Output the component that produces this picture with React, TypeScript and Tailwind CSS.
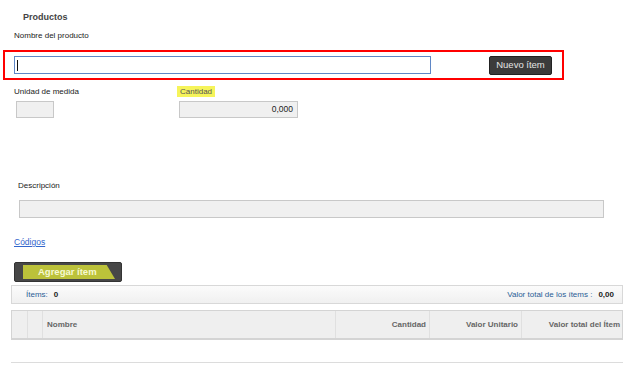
export default function App() {
  return (
    <div className="w-[633px] h-[370px] overflow-hidden bg-white text-[#222] font-['Liberation_Sans',Arial,sans-serif]">
      <div className="pl-[23px] pt-[11px] text-[9px] font-bold text-[#444] leading-[12px]">Productos</div>
      <div className="pl-[14px] mt-[8px] text-[8px] leading-[10px]">Nombre del producto</div>

      <div className="ml-[3px] mt-[9px] w-[561px] h-[30px] border-2 border-[#ff0000] flex items-center">
        <div className="ml-[9px] w-[417px] h-[18px] border border-[#5f87c6] bg-white flex items-center">
          <div className="ml-[2px] w-px h-[11px] bg-[#111]" />
        </div>
        <button className="ml-auto mr-[10px] w-[63px] h-[19px] rounded-[2px] bg-[#3b3b3b] border border-[#222] text-[9.5px] text-[#e4e4e4] leading-none">
          Nuevo ítem
        </button>
      </div>

      <div className="flex mt-[6px] leading-none">
        <div className="pl-[14px] w-[177px]">
          <div className="text-[8px] leading-[11px]">Unidad de medida</div>
          <div className="ml-[2px] mt-[4px] w-[38px] h-[17px] bg-[#f0f0f0] border border-[#c8c8c8]" />
        </div>
        <div>
          <div className="w-fit bg-[#f6f45a] px-[3px] text-[8px] leading-[11px] text-[#555]">Cantidad</div>
          <div className="ml-[2px] mt-[4px] w-[119px] h-[17px] bg-[#f0f0f0] border border-[#c8c8c8] flex items-center justify-end pr-[4px] text-[8.5px] text-[#222]">
            0,000
          </div>
        </div>
      </div>

      <div className="pl-[18px] mt-[63px] text-[8px] leading-[10px]">Descripción</div>
      <div className="ml-[19px] mt-[9px] w-[585px] h-[18px] bg-[#f0f0f0] border border-[#c8c8c8]" />

      <div className="pl-[14px] mt-[19px] text-[8.5px] leading-[11px] text-[#3366cc] underline">Códigos</div>

      <div className="ml-[14px] mt-[14px] w-[108px] h-[20px] rounded-[2px] bg-[#474747] border border-[#333] flex items-center">
        <div className="ml-[8px] w-[92px] h-[14px] bg-[#bcc23a] [clip-path:polygon(0_0,91%_0,100%_100%,0_100%)] flex items-center pl-[15px] text-[9.5px] font-bold text-[#f6f9d2] leading-none">
          Agregar ítem
        </div>
      </div>

      <div className="ml-[11px] mt-[3px] w-[612px] h-[19px] border border-[#d8d8d8] bg-gradient-to-b from-[#fbfbfb] to-[#f0f0f0] flex items-center pl-[14px] pr-[8px] text-[8px]">
        <span className="text-[#2a5d95]">Ítems:</span>
        <span className="ml-[6px] font-bold">0</span>
        <span className="ml-auto text-[#2a5d95]">Valor total de los ítems :</span>
        <span className="ml-[6px] font-bold">0,00</span>
      </div>

      <div className="ml-[11px] mt-[6px] w-[612px] h-[30px] border border-[#d4d4d4] border-b-2 bg-[#efefef] flex text-[8px] font-bold text-[#666]">
        <div className="w-[16px] border-r border-[#e0e0e0]" />
        <div className="w-[15px] border-r border-[#e0e0e0]" />
        <div className="w-[293px] flex items-center pl-[4px] border-r border-[#e0e0e0]">Nombre</div>
        <div className="w-[94px] flex items-center justify-end pr-[3px] border-r border-[#e0e0e0]">Cantidad</div>
        <div className="w-[92px] flex items-center justify-end pr-[3px] border-r border-[#e0e0e0]">Valor Unitario</div>
        <div className="flex-1 flex items-center justify-end pr-[2px]">Valor total del Ítem</div>
      </div>

      <div className="ml-[11px] mt-[22px] w-[612px] h-px bg-[#dcdcdc]" />
    </div>
  );
}
